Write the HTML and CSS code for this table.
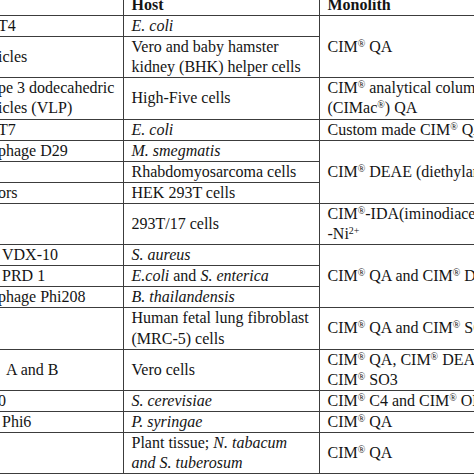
FILE: index.html
```html
<!DOCTYPE html>
<html>
<head>
<meta charset="utf-8">
<link rel="stylesheet" href="styles.css">
</head>
<body>
<table class="tbl">
  <colgroup>
    <col class="c1"><col class="c2"><col class="c3">
  </colgroup>
  <tr class="head">
    <td class="k"></td><td>Host</td><td>Monolith</td>
  </tr>
  <tr><td class="k">T4</td><td><i>E. coli</i></td><td rowspan="2">CIM<sup>®</sup> QA</td></tr>
  <tr><td class="k">icles</td><td>Vero and baby hamster<br>kidney (BHK) helper cells</td></tr>
  <tr><td class="k">pe 3 dodecahedric<br>icles (VLP)</td><td>High-Five cells</td><td>CIM<sup>®</sup> analytical column<br>(CIMac<sup>®</sup>) QA</td></tr>
  <tr><td class="k">T7</td><td><i>E. coli</i></td><td>Custom made CIM<sup>®</sup> QA</td></tr>
  <tr><td class="k">phage D29</td><td><i>M. smegmatis</i></td><td rowspan="3">CIM<sup>®</sup> DEAE (diethylaminoethyl)</td></tr>
  <tr><td class="k"></td><td>Rhabdomyosarcoma cells</td></tr>
  <tr><td class="k">ors</td><td>HEK 293T cells</td></tr>
  <tr><td class="k"></td><td>293T/17 cells</td><td>CIM<sup>®</sup>-IDA(iminodiacetic acid)<br>-Ni<sup>2+</sup></td></tr>
  <tr><td class="k">&nbsp;VDX-10</td><td><i>S. aureus</i></td><td rowspan="3">CIM<sup>®</sup> QA and CIM<sup>®</sup> DEAE</td></tr>
  <tr><td class="k">&nbsp;PRD 1</td><td><i>E.coli</i> and <i>S. enterica</i></td></tr>
  <tr><td class="k">phage Phi208</td><td><i>B. thailandensis</i></td></tr>
  <tr><td class="k"></td><td>Human fetal lung fibroblast<br>(MRC-5) cells</td><td>CIM<sup>®</sup> QA and CIM<sup>®</sup> SO3</td></tr>
  <tr><td class="k">&nbsp;&nbsp;A and B</td><td>Vero cells</td><td>CIM<sup>®</sup> QA, CIM<sup>®</sup> DEAE and<br>CIM<sup>®</sup> SO3</td></tr>
  <tr><td class="k">0</td><td><i>S. cerevisiae</i></td><td>CIM<sup>®</sup> C4 and CIM<sup>®</sup> OH</td></tr>
  <tr><td class="k">&nbsp;Phi6</td><td><i>P. syringae</i></td><td>CIM<sup>®</sup> QA</td></tr>
  <tr><td class="k"></td><td>Plant tissue; <i>N. tabacum</i><br><i>and S. tuberosum</i></td><td>CIM<sup>®</sup> QA</td></tr>
</table>
</body>
</html>
```
FILE: styles.css
```css
html, body {
  margin: 0;
  padding: 0;
  overflow: hidden;
  background: #fff;
}
body {
  width: 474px;
  height: 474px;
}
.tbl {
  border-collapse: collapse;
  table-layout: fixed;
  width: 641.5px;
  margin-top: -6px;
  margin-left: -2px;
  font-family: "Liberation Serif", "Times New Roman", serif;
  font-size: 16px;
  line-height: 20.1px;
  color: #141414;
}
.c1 { width: 125.5px; }
.c2 { width: 196px; }
.c3 { width: 320px; }
.tbl td {
  border: 1px solid #3c3c3c;
  padding: 0 0 0 7.5px;
  vertical-align: middle;
  white-space: nowrap;
  overflow: hidden;
}
.tbl td.k {
  border-left: none;
  padding-left: 0;
}
.head td {
  font-weight: bold;
}
sup {
  font-size: 0.62em;
  line-height: 0;
  vertical-align: 0.55em;
}
```
